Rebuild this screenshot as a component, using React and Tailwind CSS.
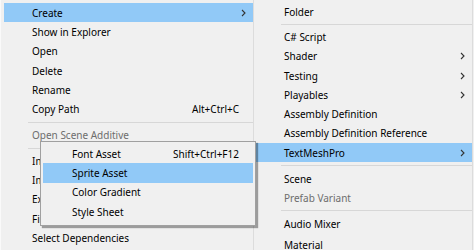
const font = { fontFamily: '"Noto Sans", "Open Sans", sans-serif' };

function Chevron() {
  return (
    <svg width="5" height="8" viewBox="0 0 5 8" className="shrink-0">
      <path d="M1 1 L4 4 L1 7" fill="none" stroke="#333" strokeWidth="1.1" />
    </svg>
  );
}

function Row({ label, shortcut, sub, active, disabled, pl = "pl-[28px]" }) {
  return (
    <div
      className={`flex items-center h-[19.3px] ${pl} pr-[7px] ${
        active ? "bg-[#91c9f7]" : ""
      } ${disabled ? "text-[#6d6d6d]" : "text-black"}`}
    >
      <span className="flex-1 whitespace-nowrap">{label}</span>
      {shortcut && <span className="whitespace-nowrap pr-[7px]">{shortcut}</span>}
      {sub && <Chevron />}
    </div>
  );
}

function Sep({ ml = "ml-[27px]", h = "h-[6px]" }) {
  return (
    <div className={`${h} flex items-center`}>
      <div className={`${ml} flex-1 h-px bg-[#d7d7d7]`} />
    </div>
  );
}

export default function App() {
  return (
    <div
      className="relative w-[474px] h-[250px] overflow-hidden bg-[#f0f0f0] text-[10px] leading-none"
      style={font}
    >
      <div className="flex h-full">
        {/* left menu */}
        <div className="w-[253px] shrink-0 pt-[3px] pl-[3px] border-l border-[#fafafa]">
          <Row label="Create" sub active />
          <Row label="Show in Explorer" />
          <Row label="Open" />
          <Row label="Delete" />
          <Row label="Rename" />
          <Row label="Copy Path" shortcut="Alt+Ctrl+C" />
          <Sep ml="ml-[24px]" h="h-[7px]" />
          <Row label="Open Scene Additive" disabled />
          <Sep ml="ml-[24px]" h="h-[6px]" />
          <Row label="Import New Asset..." />
          <Row label="Import Package" sub />
          <Row label="Export Package..." />
          <Row label="Find References In Scene" />
          <Row label="Select Dependencies" />
        </div>

        {/* right menu: Create */}
        <div className="w-[220px] shrink-0 border-l border-[#dcdcdc] border-r pt-[2px]">
          <Row label="Folder" pl="pl-[30px]" />
          <Sep />
          <Row label="C# Script" pl="pl-[30px]" />
          <Row label="Shader" sub pl="pl-[30px]" />
          <Row label="Testing" sub pl="pl-[30px]" />
          <Row label="Playables" sub pl="pl-[30px]" />
          <Row label="Assembly Definition" pl="pl-[30px]" />
          <Row label="Assembly Definition Reference" pl="pl-[30px]" />
          <Row label="TextMeshPro" sub active pl="pl-[30px]" />
          <Sep h="h-[7px]" />
          <Row label="Scene" pl="pl-[30px]" />
          <Row label="Prefab Variant" disabled pl="pl-[30px]" />
          <Sep />
          <Row label="Audio Mixer" pl="pl-[30px]" />
          <div className="h-[2px]" />
          <Row label="Material" pl="pl-[30px]" />
        </div>
      </div>

      {/* TextMeshPro submenu */}
      <div className="absolute left-[40px] top-[141px] w-[216px] h-[85px] bg-[#f0f0f0] border border-[#a0a0a0] shadow-[2px_2px_1px_rgba(0,0,0,0.35)] pt-[2px] px-[2px]">
        <Row label="Font Asset" shortcut="Shift+Ctrl+F12" pl="pl-[29px]" />
        <Row label="Sprite Asset" active pl="pl-[29px]" />
        <Row label="Color Gradient" pl="pl-[29px]" />
        <Row label="Style Sheet" pl="pl-[29px]" />
      </div>
    </div>
  );
}
